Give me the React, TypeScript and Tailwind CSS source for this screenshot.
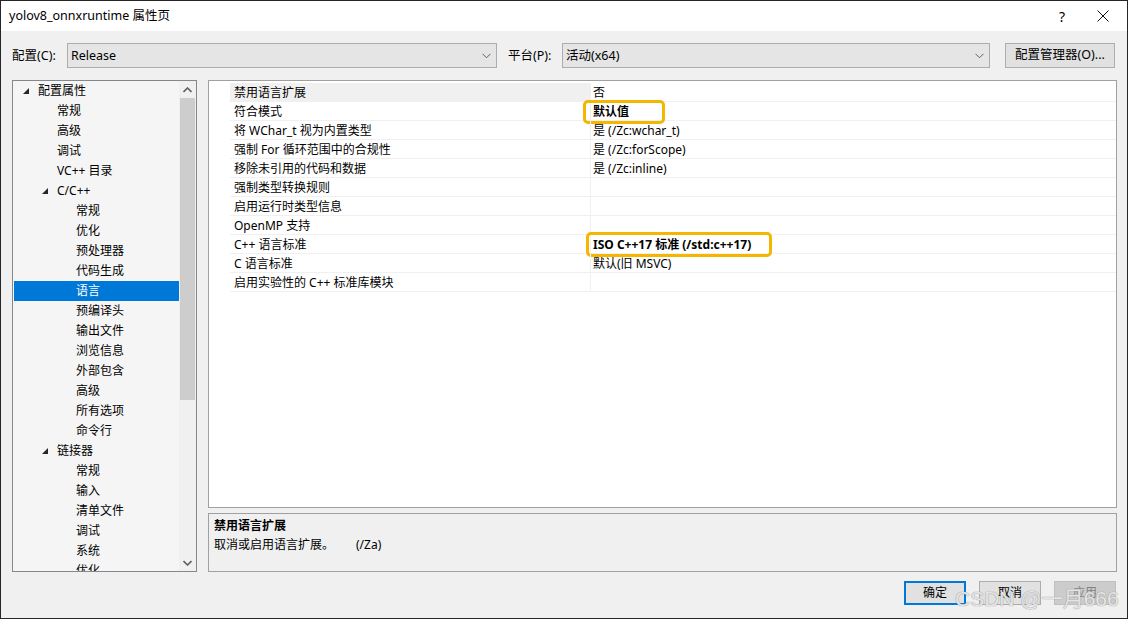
import React from "react";

const FONT = "font-['Segoe_UI','Noto_Sans','Noto_Sans_CJK_SC',sans-serif]";

type TreeItem = { t: string; lv: 0 | 1 | 2; exp?: boolean; sel?: boolean };

const tree: TreeItem[] = [
  { t: "配置属性", lv: 0, exp: true },
  { t: "常规", lv: 1 },
  { t: "高级", lv: 1 },
  { t: "调试", lv: 1 },
  { t: "VC++ 目录", lv: 1 },
  { t: "C/C++", lv: 1, exp: true },
  { t: "常规", lv: 2 },
  { t: "优化", lv: 2 },
  { t: "预处理器", lv: 2 },
  { t: "代码生成", lv: 2 },
  { t: "语言", lv: 2, sel: true },
  { t: "预编译头", lv: 2 },
  { t: "输出文件", lv: 2 },
  { t: "浏览信息", lv: 2 },
  { t: "外部包含", lv: 2 },
  { t: "高级", lv: 2 },
  { t: "所有选项", lv: 2 },
  { t: "命令行", lv: 2 },
  { t: "链接器", lv: 1, exp: true },
  { t: "常规", lv: 2 },
  { t: "输入", lv: 2 },
  { t: "清单文件", lv: 2 },
  { t: "调试", lv: 2 },
  { t: "系统", lv: 2 },
  { t: "优化", lv: 2 },
];

const padCls = ["pl-[25px]", "pl-[44px]", "pl-[63px]"];
const triCls = ["left-[10px]", "left-[29px]", "left-[48px]"];

type Row = { k: string; v: string; bold?: boolean; box?: 1 | 2; sel?: boolean };
const rows: Row[] = [
  { k: "禁用语言扩展", v: "否", sel: true },
  { k: "符合模式", v: "默认值", bold: true, box: 1 },
  { k: "将 WChar_t 视为内置类型", v: "是 (/Zc:wchar_t)" },
  { k: "强制 For 循环范围中的合规性", v: "是 (/Zc:forScope)" },
  { k: "移除未引用的代码和数据", v: "是 (/Zc:inline)" },
  { k: "强制类型转换规则", v: "" },
  { k: "启用运行时类型信息", v: "" },
  { k: "OpenMP 支持", v: "" },
  { k: "C++ 语言标准", v: "ISO C++17 标准 (/std:c++17)", bold: true, box: 2 },
  { k: "C 语言标准", v: "默认(旧 MSVC)" },
  { k: "启用实验性的 C++ 标准库模块", v: "" },
];

function Chevron() {
  return (
    <svg width="9" height="6" viewBox="0 0 9 6" className="shrink-0">
      <path d="M0.5 0.8 L4.5 4.8 L8.5 0.8" fill="none" stroke="#606060" strokeWidth="1" />
    </svg>
  );
}

function Combo({ text, w }: { text: string; w: string }) {
  return (
    <div className={`${w} h-[25px] bg-[#e5e5e5] border border-[#adadad] flex items-center pl-[3px] pr-[5px]`}>
      <span className="flex-1 text-[12.5px] text-[#000] pt-[1px]">{text}</span>
      <Chevron />
    </div>
  );
}

function Tri() {
  return (
    <svg width="6" height="6" viewBox="0 0 6 6">
      <polygon points="6,0 6,6 0,6" fill="#262626" />
    </svg>
  );
}

export default function App() {
  return (
    <div className={`w-[1128px] h-[619px] border border-[#262626] bg-[#f0f0f0] flex flex-col text-[12px] text-black ${FONT} overflow-hidden relative`}>
      {/* Title bar */}
      <div className="h-[30px] bg-white flex items-center pl-[8px] shrink-0">
        <span className="flex-1 text-[12.5px] pt-[1px]">yolov8_onnxruntime 属性页</span>
        <span className="text-[14px] w-[20px] text-center mr-[25px]">?</span>
        <svg width="12" height="12" viewBox="0 0 12 12" className="mr-[18px]">
          <path d="M0.5 0.5 L11.5 11.5 M11.5 0.5 L0.5 11.5" stroke="#111" strokeWidth="1" />
        </svg>
      </div>

      {/* Toolbar */}
      <div className="mt-[12px] h-[25px] flex items-center pl-[11px] shrink-0">
        <span className="w-[55px] text-[12.5px] pt-[1px]">配置(C):</span>
        <Combo text="Release" w="w-[430px]" />
        <span className="ml-[11px] w-[54px] text-[12.5px] pt-[1px]">平台(P):</span>
        <Combo text="活动(x64)" w="w-[428px]" />
        <div className="ml-[15px] w-[110px] h-[25px] bg-[#e1e1e1] border border-[#adadad] flex items-center justify-center text-[12.5px]">
          配置管理器(O)...
        </div>
      </div>

      {/* Main */}
      <div className="mt-[12px] h-[492px] flex gap-[11px] pl-[11px] pr-[10px] shrink-0">
        {/* Tree */}
        <div className="w-[185px] h-full border border-[#828790] bg-[#f5f5f5] flex overflow-hidden">
          <div className="flex-1 flex flex-col overflow-hidden">
            {tree.map((it, i) => (
              <div
                key={i}
                className={`relative h-[20px] shrink-0 flex items-center ${padCls[it.lv]} ${it.sel ? "bg-[#0078d7] text-white ml-[1px]" : ""}`}
              >
                {it.exp && (
                  <span className={`absolute ${triCls[it.lv]} top-[7px] flex`}>
                    <Tri />
                  </span>
                )}
                <span className={it.sel ? "-ml-[1px]" : ""}>{it.t}</span>
              </div>
            ))}
          </div>
          <div className="w-[17px] h-full bg-[#f0f0f0] flex flex-col items-center">
            <div className="h-[17px] w-full flex items-center justify-center">
              <svg width="9" height="6" viewBox="0 0 9 6">
                <path d="M0.5 5 L4.5 1 L8.5 5" fill="none" stroke="#606060" strokeWidth="1.6" />
              </svg>
            </div>
            <div className="w-[15px] h-[302px] bg-[#cdcdcd]" />
            <div className="flex-1" />
            <div className="h-[17px] w-full flex items-center justify-center">
              <svg width="9" height="6" viewBox="0 0 9 6">
                <path d="M0.5 1 L4.5 5 L8.5 1" fill="none" stroke="#606060" strokeWidth="1.6" />
              </svg>
            </div>
          </div>
        </div>

        {/* Right */}
        <div className="flex-1 flex flex-col gap-[5px]">
          <div className="h-[428px] border border-[#a0a0a0] bg-white flex flex-col pt-[2px] shrink-0">
            {rows.map((r, i) => (
              <div key={i} className="h-[19px] flex shrink-0">
                <div className="w-[21px] shrink-0" />
                <div className={`w-[360px] shrink-0 border-b border-[#f0f0f0] flex items-center pl-[4px] pt-[1px] ${r.sel ? "bg-[#f0f0f0]" : ""}`}>
                  {r.k}
                </div>
                <div className="relative flex-1 border-b border-l border-[#f0f0f0] flex items-center pl-[2px] pt-[1px]">
                  <span className={r.bold ? "font-bold" : ""}>{r.v}</span>
                  {r.box === 1 && (
                    <div className="absolute left-[-8px] top-[-2px] w-[82px] h-[24px] border-[3px] border-[#f5b500] rounded-[5px]" />
                  )}
                  {r.box === 2 && (
                    <div className="absolute left-[-5px] top-[-3px] w-[186px] h-[25px] border-[3px] border-[#f5b500] rounded-[5px]" />
                  )}
                </div>
              </div>
            ))}
          </div>
          <div className="flex-1 border border-[#a0a0a0] bg-[#f0f0f0] pl-[5px] pt-[2px] leading-[19px]">
            <div className="font-bold">禁用语言扩展</div>
            <div>
              取消或启用语言扩展。<span className="ml-[22px]">(/Za)</span>
            </div>
          </div>
        </div>
      </div>

      {/* Buttons */}
      <div className="mt-[9px] flex justify-end gap-[13px] pr-[11px] shrink-0">
        <div className="w-[62px] h-[24px] bg-[#e1e1e1] border-2 border-[#0078d7] flex items-center justify-center">确定</div>
        <div className="w-[62px] h-[24px] bg-[#e1e1e1] border border-[#adadad] flex items-center justify-center">取消</div>
        <div className="w-[62px] h-[24px] bg-[#cccccc] border border-[#bfbfbf] flex items-center justify-center text-[#838383]">应用</div>
      </div>

      {/* Watermark */}
      <div className="absolute left-[954px] top-[585px] whitespace-nowrap text-[21px] leading-[26px] font-['Liberation_Sans','Noto_Sans_CJK_SC',sans-serif] text-white/75 [text-shadow:0_0_1px_#9a9a9a,0_0_1px_#9a9a9a] pointer-events-none">
        CSDN @一月666
      </div>
    </div>
  );
}
